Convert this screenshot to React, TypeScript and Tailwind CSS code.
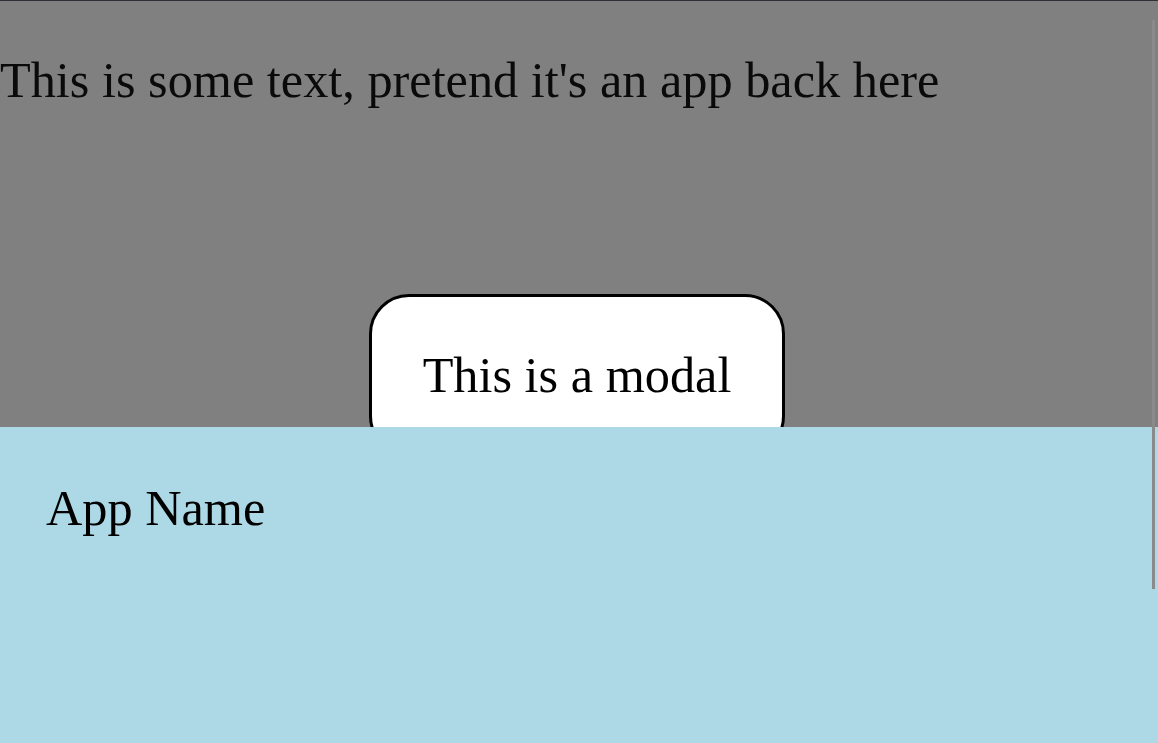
import React from 'react';

const serif = { fontFamily: '"Liberation Serif", "Times New Roman", serif' };

export default function App() {
  return (
    <div className="relative h-[743px] w-[1158px] overflow-hidden border-t border-[#2e3038] text-black" style={serif}>
      {/* dimmed app behind the modal */}
      <section className="h-[426px] overflow-hidden bg-[#808080]">
        <p className="mt-[50px] whitespace-nowrap text-[50.3px] leading-[normal] text-[#0a0a0a]">
          This is some text, pretend it's an app back here
        </p>

        {/* modal */}
        <div className="ml-[369px] mt-[185px] w-[416px] rounded-[40px] border-[3px] border-black bg-white py-[49px] text-center">
          <p className="whitespace-nowrap text-[50.3px] leading-[normal]">This is a modal</p>
        </div>
      </section>

      {/* header panel on top */}
      <header className="h-[316px] bg-[#add8e6] pl-[46px] pt-[52px]">
        <h1 className="text-[50.3px] font-normal leading-[normal]">App Name</h1>
      </header>

      {/* overlay scrollbar thumb */}
      <div className="absolute left-[1152px] top-[19px] h-[569px] w-[3px] bg-[#8a8a8a]" />
    </div>
  );
}
